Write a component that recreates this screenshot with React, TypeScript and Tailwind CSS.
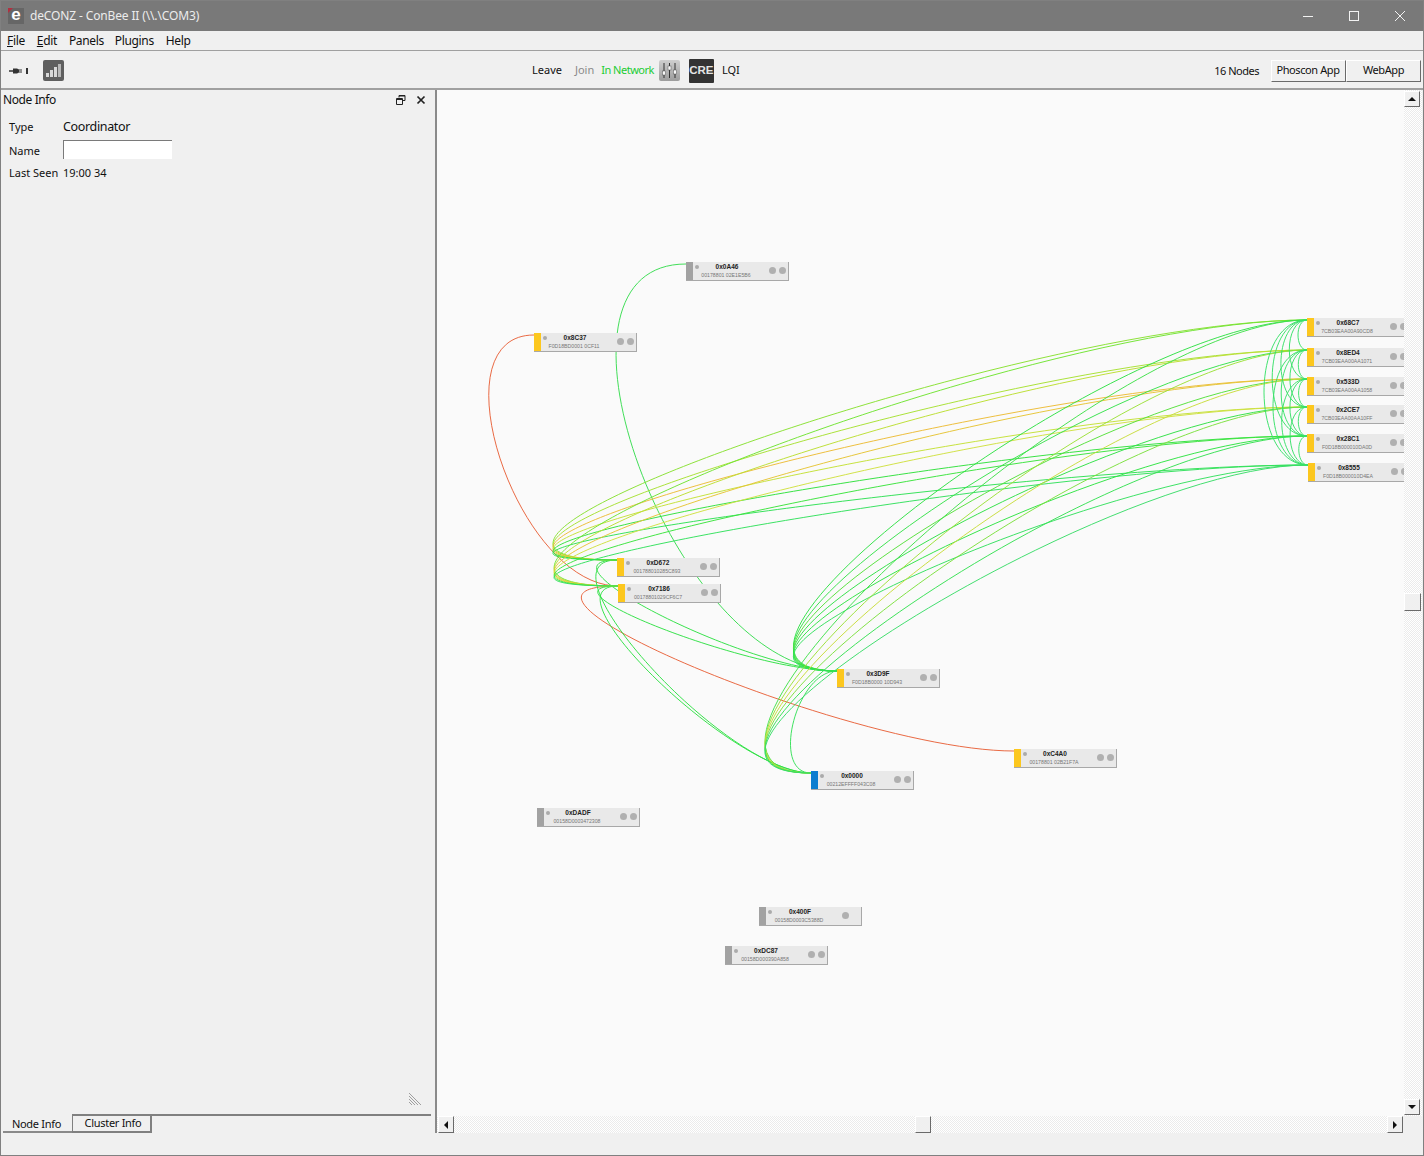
import React from "react";

type N = { id: string; serial: string; x: number; y: number; kind: "y" | "g" | "b"; dots?: number };

const OX = 437;
const OY = 90;

const NODES: N[] = [
  { id: "0x0A46", serial: "00178801 02E1E5B6", x: 686, y: 262, kind: "g" },
  { id: "0x8C37", serial: "F0D18BD0001 0CF11", x: 534, y: 333, kind: "y" },
  { id: "0xD672", serial: "001788010285C893", x: 617, y: 558, kind: "y" },
  { id: "0x7186", serial: "00178801029CF6C7", x: 618, y: 584, kind: "y" },
  { id: "0x3D9F", serial: "F0D18B0000 10D943", x: 837, y: 669, kind: "y" },
  { id: "0xC4A0", serial: "00178801 02B21F7A", x: 1014, y: 749, kind: "y" },
  { id: "0x0000", serial: "00212EFFFF043C08", x: 811, y: 771, kind: "b" },
  { id: "0xDADF", serial: "00158D0003472308", x: 537, y: 808, kind: "g" },
  { id: "0x400F", serial: "00158D0003C5388D", x: 759, y: 907, kind: "g", dots: 1 },
  { id: "0xDC87", serial: "00158D000390A858", x: 725, y: 946, kind: "g" },
  { id: "0x68C7", serial: "7CB03EAA00A90CD8", x: 1307, y: 318, kind: "y" },
  { id: "0x8ED4", serial: "7CB03EAA00AA1071", x: 1307, y: 348, kind: "y" },
  { id: "0x533D", serial: "7CB03EAA00AA1058", x: 1307, y: 377, kind: "y" },
  { id: "0x2CE7", serial: "7CB03EAA00AA10FF", x: 1307, y: 405, kind: "y" },
  { id: "0x28C1", serial: "F0D18B000010DA0D", x: 1307, y: 434, kind: "y" },
  { id: "0x8555", serial: "F0D18B000010D4EA", x: 1308, y: 463, kind: "y" },
];

const byId = (id: string) => NODES.find((n) => n.id === id) as N;
const RIGHT = ["0x68C7", "0x8ED4", "0x533D", "0x2CE7", "0x28C1", "0x8555"];

const EDGES: [string, string, string][] = [
  ["0x8C37", "0x7186", "#e8623a"],
  ["0x7186", "0xC4A0", "#e8623a"],
  ["0x0A46", "0x3D9F", "#38dc50"],
  ["0xD672", "0x3D9F", "#2fe044"],
  ["0x7186", "0x3D9F", "#2fe044"],
  ["0xD672", "0x0000", "#2fe044"],
  ["0x7186", "0x0000", "#2fe044"],
  ["0x0000", "0x3D9F", "#36e058"],
];

const RIGHT_COLORS: Record<string, string[]> = {
  "0xD672": ["#88e030", "#a6e030", "#ecbc36", "#c4e036", "#30e03c", "#2fe054"],
  "0x7186": ["#70e430", "#bcde30", "#e6c434", "#d0e040", "#3ae43c", "#32e05c"],
  "0x3D9F": ["#2fe044", "#36e24a", "#54e03a", "#2fe044", "#2ee442", "#34e05e"],
  "0x0000": ["#40e04a", "#9ce038", "#c8dc3c", "#7ce03e", "#36e052", "#3adc68"],
};
Object.entries(RIGHT_COLORS).forEach(([from, colors]) =>
  RIGHT.forEach((to, i) => EDGES.push([from, to, colors[i]]))
);
RIGHT.forEach((a, i) =>
  RIGHT.forEach((b, j) => {
    if (j > i) EDGES.push([a, b, "#38e068"]);
  })
);

function edgePath(a: string, b: string) {
  const p = byId(a);
  const q = byId(b);
  const x0 = p.x;
  const y0 = p.y + 2;
  const x1 = q.x;
  const y1 = q.y + 2;
  const k = Math.max(0.4 * Math.abs(x1 - x0), 0.4 * Math.abs(y1 - y0));
  return `M${x0} ${y0}C${x0 - k} ${y0} ${x1 - k} ${y1} ${x1} ${y1}`;
}

function GraphNode({ n }: { n: N }) {
  const bar = n.kind === "y" ? "bg-[#fcc71e]" : n.kind === "b" ? "bg-[#0b7dd0]" : "bg-[#a2a2a2]";
  const dots = n.dots ?? 2;
  return (
    <div
      className="absolute flex h-[19px] w-[103px] border-r border-b border-[#a8a8a8] bg-[#e9e9e9]"
      style={{ left: n.x - OX, top: n.y - OY }}
    >
      <div className={`h-full w-[7px] shrink-0 ${bar}`} />
      <div className="relative flex-1">
        <span className="absolute left-[2px] top-[3px] h-[4px] w-[4px] rounded-full bg-[#ababab]" />
        <div className="absolute left-[9px] top-[1px] w-[50px] text-center font-['Liberation_Sans',sans-serif] text-[6.5px] font-bold leading-[8px] text-[#222]">
          {n.id}
        </div>
        <div className="absolute left-[5px] top-[10px] w-[56px] text-center font-['Liberation_Sans',sans-serif] text-[5.2px] leading-[7px] text-[#777]">
          {n.serial}
        </div>
        <div className="absolute right-[2px] top-[5px] flex w-[17px] justify-between">
          <span className="h-[7px] w-[7px] rounded-full bg-[#b0b0b0]" />
          {dots === 2 ? <span className="h-[7px] w-[7px] rounded-full bg-[#b0b0b0]" /> : null}
        </div>
      </div>
    </div>
  );
}

const raised =
  "border-t border-l border-t-white border-l-white border-r border-b border-r-[#6a6a6a] border-b-[#6a6a6a] bg-[#f0f0f0]";
const dither =
  "bg-[repeating-conic-gradient(#ebebeb_0_25%,#ffffff_0_50%)] bg-[length:2px_2px]";

function Arrow({ d }: { d: "u" | "d" | "l" | "r" }) {
  const pts = { u: "1,7 9,7 5,3", d: "1,3 9,3 5,7", l: "7,1 7,9 3,5", r: "3,1 3,9 7,5" }[d];
  return (
    <svg width="10" height="10" viewBox="0 0 10 10">
      <polygon points={pts} fill="#111" />
    </svg>
  );
}

function App() {
  return (
    <div className="flex h-[1156px] w-[1424px] flex-col overflow-hidden border border-[#808080] bg-[#f0f0f0] font-['Noto_Sans',sans-serif] text-[#111]">
      {/* title bar */}
      <div className="flex h-[30px] shrink-0 items-center bg-[#797979] pl-[7px] text-[#ececec]">
        <div className="relative flex h-[16px] w-[16px] items-center justify-center bg-[#666] font-['Liberation_Sans',sans-serif] text-[17px] font-bold leading-none text-white">
          <span className="relative top-[-2px]">e</span>
          <svg width="5" height="5" viewBox="0 0 5 5" className="absolute left-0 top-0">
            <polygon points="0,0 5,0 0,5" fill="#b03040" />
          </svg>
        </div>
        <span className="ml-[6px] text-[12px] tracking-[-0.14px]">deCONZ - ConBee II (\\.\COM3)</span>
        <div className="ml-auto flex items-center">
          <svg width="46" height="20" viewBox="0 0 46 20">
            <path d="M18 10.5h10" stroke="#f2f2f2" strokeWidth="1" />
          </svg>
          <svg width="46" height="20" viewBox="0 0 46 20">
            <rect x="18.5" y="5.5" width="9" height="9" fill="none" stroke="#f2f2f2" />
          </svg>
          <svg width="46" height="20" viewBox="0 0 46 20">
            <path d="M18 5l10 10M28 5L18 15" stroke="#f2f2f2" strokeWidth="1" />
          </svg>
        </div>
      </div>

      {/* menu */}
      <div className="flex h-[20px] shrink-0 items-center border-b border-[#a0a0a0] bg-[#f0f0f0] pl-[6px] text-[12px] tracking-[-0.35px]">
        <span className="mr-[12px]"><u>F</u>ile</span>
        <span className="mr-[12px]"><u>E</u>dit</span>
        <span className="mr-[11px]">Panels</span>
        <span className="mr-[12px]">Plugins</span>
        <span>Help</span>
      </div>

      {/* toolbar */}
      <div className="flex h-[39px] shrink-0 items-center border-b-2 border-[#a0a0a0] pl-[8px] pt-[2px] text-[11px]">
        <svg width="20" height="10" viewBox="0 0 20 10" className="shrink-0">
          <path d="M0 5h4" stroke="#333" strokeWidth="1.5" />
          <path d="M4 2.5h4l2 1h3v1H10v1h3v1h-3l-2 1H4z" fill="#333" />
          <rect x="17" y="2" width="2" height="6" fill="#333" />
        </svg>
        <div className="ml-[14px] flex h-[21px] w-[21px] shrink-0 items-end justify-center gap-[1px] rounded-[2px] bg-[#5f5f5f] pb-[4px]">
          <span className="h-[4px] w-[3px] bg-[#d8d8d8]" />
          <span className="h-[7px] w-[3px] bg-[#d8d8d8]" />
          <span className="h-[10px] w-[3px] bg-[#d8d8d8]" />
          <span className="h-[13px] w-[3px] bg-[#b8b8b8]" />
        </div>
        <span className="ml-[468px]">Leave</span>
        <span className="ml-[13px] text-[#8a8a8a]">Join</span>
        <span className="ml-[7px] tracking-[-0.5px] text-[#22cc33]">In Network</span>
        <div className="ml-[5px] flex h-[21px] w-[21px] shrink-0 items-center justify-center rounded-[2px] bg-gradient-to-b from-[#cfcfcf] to-[#9c9c9c]">
          <svg width="17" height="17" viewBox="0 0 17 17">
            <path d="M3 1v15M8.5 1v15M14 1v15" stroke="#333" strokeWidth="1" />
            <rect x="1.5" y="9" width="3" height="4" fill="#f8f8f8" stroke="#555" strokeWidth=".5" />
            <rect x="7" y="4" width="3" height="4" fill="#f8f8f8" stroke="#555" strokeWidth=".5" />
            <rect x="12.5" y="8" width="3" height="4" fill="#f8f8f8" stroke="#555" strokeWidth=".5" />
          </svg>
        </div>
        <div className="ml-[9px] flex h-[24px] w-[25px] shrink-0 items-center justify-center rounded-[1px] bg-[#333] font-['Liberation_Sans',sans-serif] text-[11.5px] font-bold text-[#e4e4e4]">
          CRE
        </div>
        <span className="ml-[8px]">LQI</span>
        <div className="ml-auto flex items-center pr-[2px]">
          <span className="mr-[12px] mt-[1px] tracking-[-0.5px]">16 Nodes</span>
          <button className={`h-[22px] w-[75px] ${raised} pr-[1px] text-[11px] tracking-[-0.4px]`}>Phoscon App</button>
          <button className={`h-[22px] w-[75px] ${raised} text-[11px] tracking-[-0.4px]`}>WebApp</button>
        </div>
      </div>

      {/* body */}
      <div className="flex min-h-0 flex-1">
        {/* dock */}
        <div className="flex w-[434px] shrink-0 flex-col text-[11px]">
          <div className="flex h-[20px] items-center pl-[2px] pr-[9px] text-[12px] tracking-[-0.4px]">
            <span>Node Info</span>
            <svg width="10" height="10" viewBox="0 0 10 10" className="ml-auto">
              <path d="M3 2.5V.5h6v5H7M.5 3.5h6v6h-6z" fill="none" stroke="#222" />
              <path d="M3 1h6M1 4.5h5" stroke="#222" />
            </svg>
            <svg width="10" height="10" viewBox="0 0 10 10" className="ml-[10px]">
              <path d="M1.5 1.5l7 7M8.5 1.5l-7 7" stroke="#222" strokeWidth="1.7" />
            </svg>
          </div>
          <div className="mt-[5px] grid grid-cols-[54px_109px] items-center gap-y-[3px] pl-[8px]">
            <span className="pt-[2px] leading-[20px]">Type</span>
            <span className="pt-[2px] text-[12.5px] leading-[20px] tracking-[-0.35px]">Coordinator</span>
            <span className="pt-[3px]">Name</span>
            <div className="h-[19px] border-t border-l border-t-[#7a7a7a] border-l-[#7a7a7a] bg-white" />
            <span className="pb-[2px] leading-[20px]">Last Seen</span>
            <span className="pb-[2px] leading-[20px]">19:00 34</span>
          </div>
          <div className="flex-1" />
          <div className="flex justify-end pr-[13px]">
            <svg width="14" height="13" viewBox="0 0 14 13">
              <path d="M1 1l12 12M1 4l9 9M1 7l6 6M1 10l3 3" stroke="#8a8a8a" strokeWidth=".8" />
            </svg>
          </div>
          <div className="mt-[9px] flex h-[41px] pl-[2px] pr-[4px] tracking-[-0.3px]">
            <div className="flex h-[19px] w-[69px] items-center justify-center self-start border-b-2 border-[#8a8a8a] pr-[2px] pt-[3px]">
              Node Info
            </div>
            <div className="flex-1">
              <div className="h-[2px] border-t-2 border-[#808080]" />
              <div className="flex h-[17px] w-[80px] items-center justify-center border-r-2 border-b-2 border-l border-[#808080] pl-[3px]">
                Cluster Info
              </div>
            </div>
          </div>
        </div>

        {/* canvas + scrollbars */}
        <div className="flex min-w-0 flex-1 flex-col pb-[22px] pr-[1px]">
          <div className="flex min-h-0 flex-1 flex-col border-l-2 border-[#8a8a8a]">
            <div className="flex min-h-0 flex-1">
              <div className="relative flex-1 overflow-hidden bg-[#fafafa]">
                <svg className="absolute left-0 top-0" width="967" height="1026" viewBox={`${OX} ${OY} 967 1026`}>
                  <g fill="none" strokeWidth="0.95">
                    {EDGES.map(([a, b, c], i) => (
                      <path key={i} d={edgePath(a, b)} stroke={c} />
                    ))}
                  </g>
                </svg>
                {NODES.map((n) => (
                  <GraphNode key={n.id} n={n} />
                ))}
              </div>
              <div className={`flex w-[18px] shrink-0 flex-col pb-[1px] pt-[1px] ${dither}`}>
                <div className={`flex h-[16px] w-[16px] items-center justify-center ${raised}`}>
                  <Arrow d="u" />
                </div>
                <div className="flex-1" />
                <div className={`h-[18px] w-[17px] ${raised}`} />
                <div className="h-[488px]" />
                <div className={`flex h-[16px] w-[16px] items-center justify-center ${raised}`}>
                  <Arrow d="d" />
                </div>
              </div>
            </div>
            <div className={`flex h-[17px] shrink-0 items-stretch pl-[1px] ${dither}`}>
              <div className={`flex w-[16px] items-center justify-center ${raised}`}>
                <Arrow d="l" />
              </div>
              <div className="flex-1" />
              <div className={`w-[16px] ${raised}`} />
              <div className="w-[456px]" />
              <div className={`flex w-[16px] items-center justify-center ${raised}`}>
                <Arrow d="r" />
              </div>
              <div className="w-[19px] bg-[#f0f0f0]" />
            </div>
          </div>
        </div>
      </div>
    </div>
  );
}

export default App;
